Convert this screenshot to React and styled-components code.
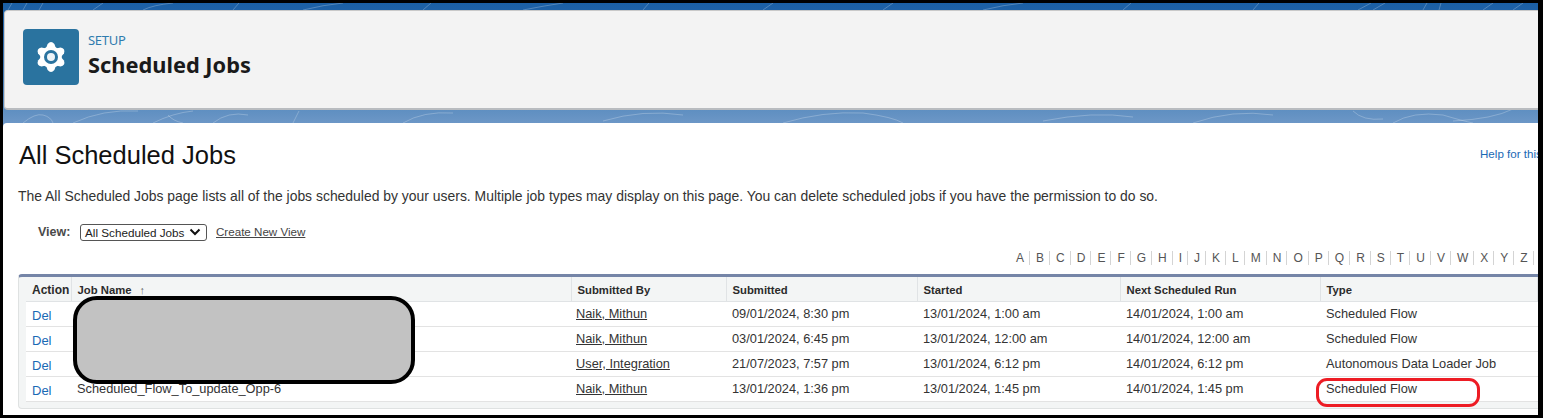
import React from "react";
import styled, { createGlobalStyle } from "styled-components";

const Global = createGlobalStyle`
  html, body { margin: 0; padding: 0; background: #000; }
  * { box-sizing: border-box; }
`;

const Frame = styled.div`
  width: 1543px;
  height: 418px;
  overflow: hidden;
  background: #000;
  padding: 3px 5px 3px 3px;
  font-family: "Liberation Sans", Arial, sans-serif;
`;

const Stage = styled.div`
  position: relative;
  height: 412px;
  overflow: hidden;
  background: linear-gradient(180deg, #1b5fa5 0%, #2a69ab 8%, #5f8fc1 26%, #7099c8 30%);
  padding-top: 7px;
  display: flex;
  flex-direction: column;
  gap: 13px;
`;

const Swirls = styled.svg`
  position: absolute;
  left: 0;
  top: 0;
  width: 1535px;
  height: 120px;
  fill: none;
  stroke: rgba(255, 255, 255, 0.24);
  stroke-width: 1;
`;

const HeaderCard = styled.header`
  position: relative;
  height: 100px;
  flex: none;
  margin-left: 1px;
  background: #f3f3f3;
  border: 1px solid #c9c9c9;
  border-bottom: 2px solid #b9bcc0;
  border-right: 0;
  border-radius: 4px 0 0 4px;
  display: flex;
  align-items: center;
  gap: 9px;
  padding: 0 0 6px 18px;
`;

const IconTile = styled.div`
  width: 56px;
  height: 56px;
  flex: none;
  border-radius: 4px;
  background: #2a739f;
  display: flex;
  align-items: center;
  justify-content: center;
`;

const Titles = styled.div`
  display: flex;
  flex-direction: column;
  gap: 3px;
  margin-top: -3px;
`;

const Eyebrow = styled.div`
  font: 400 13px/16px "Noto Sans", sans-serif;
  color: #2f7bae;
  letter-spacing: -0.3px;
`;

const PageName = styled.h1`
  margin: 0;
  font: 700 21.8px/27px "Noto Sans", sans-serif;
  color: #1a1a1a;
`;

const Content = styled.main`
  position: relative;
  flex: 1;
  min-height: 0;
  background: #fff;
  border-radius: 4px 0 0 0;
  padding: 0 0 0 15px;
  overflow: hidden;
`;

const TitleRow = styled.div`
  display: flex;
  align-items: flex-start;
  height: 65px;
`;

const Title = styled.h2`
  flex: 1;
  margin: 15px 0 0 1px;
  font: 400 25.5px/34px "Liberation Sans", Arial, sans-serif;
  color: #111;
`;

const HelpLink = styled.a`
  flex: 0 0 58px;
  margin-top: 23px;
  overflow: hidden;
  white-space: nowrap;
  font-size: 11.6px;
  line-height: 15px;
  color: #1a69b5;
`;

const Description = styled.p`
  margin: 0;
  font-size: 13.93px;
  line-height: 16px;
  color: #333;
  white-space: nowrap;
`;

const ViewRow = styled.div`
  display: flex;
  align-items: center;
  height: 20px;
  margin-top: 18px;
  padding-left: 20px;
`;

const ViewLabel = styled.span`
  font-size: 12.5px;
  font-weight: 700;
  color: #4a4a4a;
  width: 42px;
`;

const ViewSelect = styled.div`
  width: 127px;
  height: 17px;
  border: 1px solid #555;
  border-radius: 3px;
  display: flex;
  align-items: center;
  justify-content: space-between;
  padding: 0 5px 0 4px;
  font-size: 11.7px;
  color: #222;
  white-space: nowrap;
`;

const ViewLink = styled.a`
  margin: -2px 0 0 9px;
  font-size: 11.6px;
  color: #444;
  text-decoration: underline;
`;

const AlphaRow = styled.div`
  display: flex;
  height: 14px;
  margin-top: 9px;
  padding-left: 992px;
  font-size: 12px;
  line-height: 14px;
  color: #555;
  white-space: nowrap;
  overflow: hidden;
`;

const AlphaItem = styled.span`
  flex: none;
  padding: 0 5px 0 6px;
  border-left: ${(p) => (p.$first ? "0" : "1px solid #d4d4d4")};
`;

const TablePanel = styled.section`
  position: relative;
  margin-top: 9px;
  height: 135px;
  background: #f3f5f5;
  border-top: 3px solid #7585a7;
  border-left: 1px solid #dfe2e2;
  border-bottom: 1px solid #dfe2e2;
  border-radius: 4px 0 0 4px;
  padding-left: 7px;
`;

const Table = styled.table`
  width: 1512px;
  table-layout: fixed;
  border-collapse: collapse;
  background: #fff;
  color: #222;
`;

const Th = styled.th`
  height: 24px;
  padding: 3px 0 0 6px;
  text-align: left;
  font-size: ${(p) => p.$size ?? 11.3}px;
  font-weight: 700;
  color: #2b2b2b;
  background: #f3f5f5;
  border-bottom: 1px solid #e0e3e5;
  border-right: 1px solid #e0e3e5;
  white-space: nowrap;
`;

const Td = styled.td`
  height: 25px;
  padding: 0 0 1px ${(p) => p.$pad ?? 6}px;
  border-bottom: 1px solid #e3e3e3;
  white-space: nowrap;
  font-size: 12.8px;
  color: #333;
`;

const DelLink = styled.a`
  position: relative;
  top: 2px;
  font-size: 13px;
  color: #1a69b5;
`;

const UserLink = styled.a`
  color: #333;
  text-decoration: underline;
`;

const SortArrow = styled.span`
  margin-left: 8px;
  font-size: 11px;
  color: #666;
`;

const Redaction = styled.div`
  position: absolute;
  left: 54px;
  top: 19px;
  width: 342px;
  height: 88px;
  background: #c2c2c2;
  border: 4px solid #000;
  border-radius: 24px;
`;

const Highlight = styled.div`
  position: absolute;
  left: 1297px;
  top: 101px;
  width: 164px;
  height: 29px;
  border: 3px solid #ed1c24;
  border-radius: 11px;
`;

const letters = "A B C D E F G H I J K L M N O P Q R S T U V W X Y Z Other All".split(" ");

const rows = [
  ["", "Naik, Mithun", "09/01/2024, 8:30 pm", "13/01/2024, 1:00 am", "14/01/2024, 1:00 am", "Scheduled Flow"],
  ["", "Naik, Mithun", "03/01/2024, 6:45 pm", "13/01/2024, 12:00 am", "14/01/2024, 12:00 am", "Scheduled Flow"],
  ["", "User, Integration", "21/07/2023, 7:57 pm", "13/01/2024, 6:12 pm", "14/01/2024, 6:12 pm", "Autonomous Data Loader Job"],
  ["Scheduled_Flow_To_update_Opp-6", "Naik, Mithun", "13/01/2024, 1:36 pm", "13/01/2024, 1:45 pm", "14/01/2024, 1:45 pm", "Scheduled Flow"],
];

const Gear = () => {
  const teeth = [0, 60, 120, 180, 240, 300];
  return (
    <svg width="34" height="34" viewBox="-17 -17 34 34" aria-hidden="true">
      <circle r="10.8" fill="#fff" />
      {teeth.map((a) => (
        <g key={a} transform={`rotate(${a})`}>
          <path d="M-5 -8.5 L-3.4 -13 Q0 -17 3.4 -13 L5 -8.5 Z" fill="#fff" />
        </g>
      ))}
      <circle r="7" fill="#2a739f" />
      <circle r="4" fill="#eef4f8" />
    </svg>
  );
};

const Chevron = () => (
  <svg width="12" height="8" viewBox="0 0 12 8" aria-hidden="true">
    <path d="M1.5 1.5 L6 6 L10.5 1.5" fill="none" stroke="#111" strokeWidth="2" />
  </svg>
);

export default function App() {
  return (
    <>
      <Global />
      <Frame>
        <Stage>
          <Swirls viewBox="0 0 1535 120" aria-hidden="true">
            <path d="M5 7 L9 0 M20 7 L24 0 M36 7 L40 0 M90 7 L100 0 M140 7 Q150 2 170 0 M230 7 L236 0 M300 7 Q320 2 340 0 M420 7 L428 0 M520 7 Q540 3 560 0 M640 7 L646 0 M760 7 L770 0 M880 7 L890 0 M980 7 Q1000 2 1020 0 M1120 7 L1128 0 M1250 7 L1256 0 M1355 7 L1368 0 M1370 7 L1382 0 M1420 7 L1424 0 M1436 7 L1438 0 M1480 7 L1490 0 M1510 7 L1520 0" />
            <path d="M20 120 Q32 110 40 112 Q48 114 50 120 M70 120 Q100 106 135 108 M150 120 Q170 110 190 108 M165 112 Q170 118 180 120 M210 120 Q225 108 245 112 M290 120 L296 108 M400 120 Q420 108 450 110 M600 118 Q640 106 680 112 M780 120 Q820 108 860 110 Q890 114 900 120 M1040 118 Q1090 108 1130 114 M1190 120 Q1230 106 1270 112 M1350 108 Q1360 118 1380 116 M1390 120 Q1410 108 1440 112 Q1460 118 1470 120 M1450 118 Q1490 116 1510 106" />
          </Swirls>
          <HeaderCard>
            <IconTile>
              <Gear />
            </IconTile>
            <Titles>
              <Eyebrow>SETUP</Eyebrow>
              <PageName>Scheduled Jobs</PageName>
            </Titles>
          </HeaderCard>
          <Content>
            <TitleRow>
              <Title>All Scheduled Jobs</Title>
              <HelpLink>Help for this Page</HelpLink>
            </TitleRow>
            <Description>
              The All Scheduled Jobs page lists all of the jobs scheduled by your users. Multiple job types may display on this page. You can delete scheduled jobs if you have the permission to do so.
            </Description>
            <ViewRow>
              <ViewLabel>View:</ViewLabel>
              <ViewSelect>
                All Scheduled Jobs
                <Chevron />
              </ViewSelect>
              <ViewLink>Create New View</ViewLink>
            </ViewRow>
            <AlphaRow>
              {letters.map((l, i) => (
                <AlphaItem key={l} $first={i === 0}>{l}</AlphaItem>
              ))}
            </AlphaRow>
            <TablePanel>
              <Table>
                <colgroup>
                  <col style={{ width: 45 }} />
                  <col style={{ width: 500 }} />
                  <col style={{ width: 155 }} />
                  <col style={{ width: 191 }} />
                  <col style={{ width: 203 }} />
                  <col style={{ width: 200 }} />
                  <col />
                </colgroup>
                <thead>
                  <tr>
                    <Th $size={12}>Action</Th>
                    <Th>Job Name<SortArrow>↑</SortArrow></Th>
                    <Th>Submitted By</Th>
                    <Th>Submitted</Th>
                    <Th>Started</Th>
                    <Th>Next Scheduled Run</Th>
                    <Th>Type</Th>
                  </tr>
                </thead>
                <tbody>
                  {rows.map((r, i) => (
                    <tr key={i}>
                      <Td><DelLink>Del</DelLink></Td>
                      <Td>{r[0]}</Td>
                      <Td $pad={5}><UserLink>{r[1]}</UserLink></Td>
                      <Td>{r[2]}</Td>
                      <Td>{r[3]}</Td>
                      <Td>{r[4]}</Td>
                      <Td>{r[5]}</Td>
                    </tr>
                  ))}
                </tbody>
              </Table>
              <Redaction />
              <Highlight />
            </TablePanel>
          </Content>
        </Stage>
      </Frame>
    </>
  );
}
